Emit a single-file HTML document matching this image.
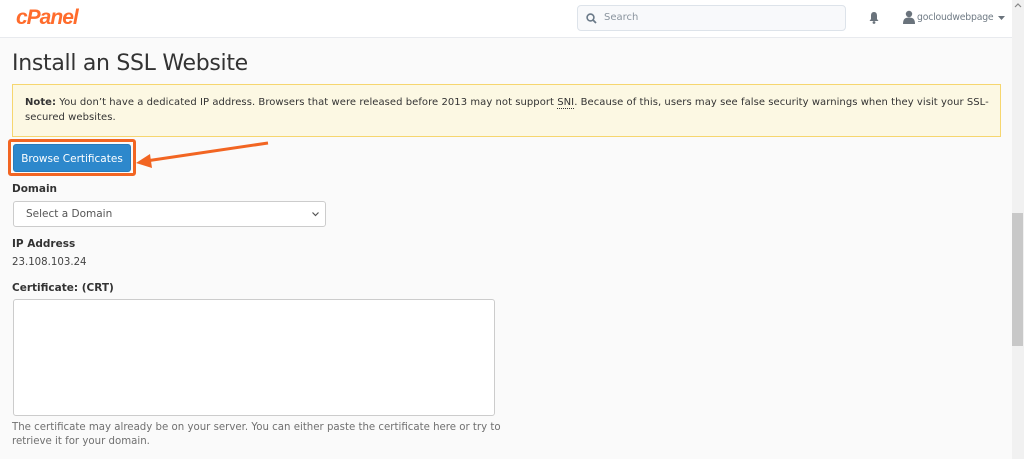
<!DOCTYPE html>
<html><head><meta charset="utf-8">
<style>
*{box-sizing:border-box;margin:0;padding:0}
body{width:1024px;height:459px;overflow:hidden;background:#fafafa;font-family:"DejaVu Sans","Liberation Sans",sans-serif;color:#333;position:relative}
.top{position:absolute;left:0;top:0;width:1012px;height:38px;background:#fff;border-bottom:1px solid #e8eaee}
.logo{position:absolute;left:16px;top:6px;font:italic bold 21px "Liberation Sans",sans-serif;color:#ff6c2c;letter-spacing:-1px}
.search{position:absolute;left:577px;top:5px;width:269px;height:26px;border:1px solid #dde3ea;border-radius:4px;background:#f8f9fb}
.search span{position:absolute;left:26px;top:6px;font-size:10px;color:#8a949e}
.user{position:absolute;left:917px;top:12px;font-size:9.3px;color:#707b85;letter-spacing:-.2px}
h1{position:absolute;left:12px;top:51px;font-weight:normal;font-size:22px;color:#333;font-family:"DejaVu Sans",sans-serif;letter-spacing:-.3px}
.note{position:absolute;left:12px;top:84px;width:989px;height:53px;background:#fcf8e3;border:1px solid #f6d66f;padding:10px 12px;font-size:10px;line-height:15px;color:#333;letter-spacing:.05px;white-space:nowrap}
.obox{position:absolute;left:8px;top:139px;width:128px;height:37px;border:3px solid #f26522;border-radius:3px}
.btn{position:absolute;left:13px;top:144px;width:118px;height:28px;background:#2d88cc;color:#fff;font-size:10.5px;text-align:center;line-height:28px;border-radius:3px;border:1px solid #2a7ab8}
.lbl{position:absolute;left:12px;font-size:10.5px;font-weight:bold;color:#333}
.txt{position:absolute;left:12px;font-size:10.2px;color:#444}
.sel{position:absolute;left:13px;top:201px;width:313px;height:26px;background:#fff;border:1px solid #ccc;border-radius:3px;font-size:10.5px;color:#555;padding:6px 12px}
.ta{position:absolute;left:13px;top:299px;width:482px;height:117px;background:#fff;border:1px solid #ccc;border-radius:3px}
.help{position:absolute;left:12px;top:421px;width:492px;font-size:10.2px;line-height:14px;color:#707070}
.sb{position:absolute;left:1012px;top:0;width:12px;height:459px;background:#f1f1f1}
.th{position:absolute;left:1012px;top:213px;width:11px;height:133px;background:#c8c8c8}
</style></head><body>
<div class="top">
<div class="logo">cPanel</div>
<div class="search"><svg style="position:absolute;left:8px;top:7px" width="11" height="11" viewBox="0 0 11 11"><circle cx="4.5" cy="4.5" r="3.4" fill="none" stroke="#6b7a89" stroke-width="1.6"/><line x1="7" y1="7" x2="10" y2="10" stroke="#6b7a89" stroke-width="1.8"/></svg><span>Search</span></div>
<svg style="position:absolute;left:868px;top:11px" width="12" height="13" viewBox="0 0 12 13"><path d="M6 1C3.5 1 3 3 3 5v3L1.5 10h9L9 8V5C9 3 8.5 1 6 1z" fill="#6a737c"/><circle cx="6" cy="11.5" r="1.4" fill="#6a737c"/></svg>
<svg style="position:absolute;left:903px;top:10px" width="12" height="14" viewBox="0 0 12 14"><circle cx="6" cy="4" r="3.2" fill="#6a737c"/><path d="M0 14c0-5 2-6.5 6-6.5s6 1.5 6 6.5z" fill="#6a737c"/></svg>
<div class="user">gocloudwebpage</div>
<svg style="position:absolute;left:998px;top:16px" width="7" height="4"><path d="M0 0h7L3.5 4z" fill="#6a737c"/></svg>
</div>
<h1>Install an SSL Website</h1>
<div class="note"><b>Note:</b> You don’t have a dedicated IP address. Browsers that were released before 2013 may not support <span style="border-bottom:1px dotted #333">SNI</span>. Because of this, users may see false security warnings when they visit your SSL-<br>secured websites.</div>
<div class="obox"></div>
<div class="btn">Browse Certificates</div>
<svg style="position:absolute;left:130px;top:138px" width="145" height="32"><line x1="138" y1="5" x2="16" y2="23" stroke="#f26522" stroke-width="3"/><path d="M6 25L20 16L22 30z" fill="#f26522"/></svg>
<div class="lbl" style="top:183px">Domain</div>
<div class="sel">Select a Domain<svg style="position:absolute;right:6px;top:10px" width="7" height="5"><path d="M0.5 0.5L3.5 3.5L6.5 0.5" fill="none" stroke="#555" stroke-width="1.2"/></svg></div>
<div class="lbl" style="top:238px">IP Address</div>
<div class="txt" style="top:257px">23.108.103.24</div>
<div class="lbl" style="top:282px">Certificate: (CRT)</div>
<div class="ta"></div>
<div class="help">The certificate may already be on your server. You can either paste the certificate here or try to retrieve it for your domain.</div>
<div class="sb"></div><div class="th"></div>
<svg style="position:absolute;left:1014px;top:3px" width="8" height="5"><path d="M1 4L4 1L7 4" fill="none" stroke="#888" stroke-width="1.2"/></svg>
</body></html>
